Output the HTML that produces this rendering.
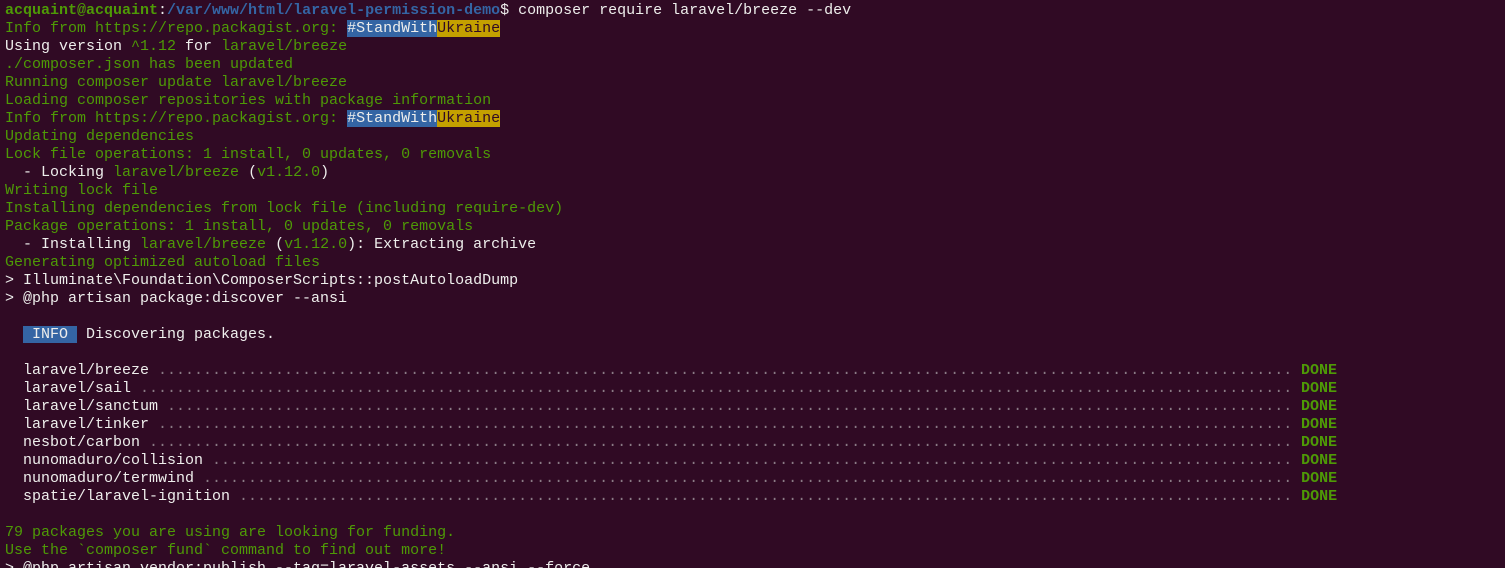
<!DOCTYPE html>
<html><head><meta charset="utf-8"><style>
html,body{margin:0;padding:0;background:#300a24;width:1505px;height:568px;overflow:hidden}
pre{margin:0;padding:2px 0 0 5px;font-family:"Liberation Mono",monospace;font-size:15px;line-height:18px;color:#eeeeec;white-space:pre}
.g{color:#4e9a06}.gb{color:#4e9a06;font-weight:bold}.b{color:#3465a4}.bb{color:#3465a4;font-weight:bold}
.sb{background:#3465a4;color:#eeeeec}.sy{background:#c4a000;color:#300a24}
.d{color:#8a7a85;display:inline-block;overflow:hidden;vertical-align:bottom;height:18px}
</style></head><body><pre><span class="gb">acquaint@acquaint</span>:<span class="bb">/var/www/html/laravel-permission-demo</span>$ composer require laravel/breeze --dev
<span class="g">Info from https://repo.packagist.org: </span><span class="sb">#StandWith</span><span class="sy">Ukraine</span>
Using version <span class="g">^1.12</span> for <span class="g">laravel/breeze</span>
<span class="g">./composer.json has been updated</span>
<span class="g">Running composer update laravel/breeze</span>
<span class="g">Loading composer repositories with package information</span>
<span class="g">Info from https://repo.packagist.org: </span><span class="sb">#StandWith</span><span class="sy">Ukraine</span>
<span class="g">Updating dependencies</span>
<span class="g">Lock file operations: 1 install, 0 updates, 0 removals</span>
  - Locking <span class="g">laravel/breeze</span> (<span class="g">v1.12.0</span>)
<span class="g">Writing lock file</span>
<span class="g">Installing dependencies from lock file (including require-dev)</span>
<span class="g">Package operations: 1 install, 0 updates, 0 removals</span>
  - Installing <span class="g">laravel/breeze</span> (<span class="g">v1.12.0</span>): Extracting archive
<span class="g">Generating optimized autoload files</span>
&gt; Illuminate\Foundation\ComposerScripts::postAutoloadDump
&gt; @php artisan package:discover --ansi

  <span class="sb"> INFO </span> Discovering packages.

  laravel/breeze <span class="d" style="width:1134px">.................................................................................................................................</span> <span class="gb">DONE</span>
  laravel/sail <span class="d" style="width:1152px">.................................................................................................................................</span> <span class="gb">DONE</span>
  laravel/sanctum <span class="d" style="width:1125px">.................................................................................................................................</span> <span class="gb">DONE</span>
  laravel/tinker <span class="d" style="width:1134px">.................................................................................................................................</span> <span class="gb">DONE</span>
  nesbot/carbon <span class="d" style="width:1143px">.................................................................................................................................</span> <span class="gb">DONE</span>
  nunomaduro/collision <span class="d" style="width:1080px">.................................................................................................................................</span> <span class="gb">DONE</span>
  nunomaduro/termwind <span class="d" style="width:1089px">.................................................................................................................................</span> <span class="gb">DONE</span>
  spatie/laravel-ignition <span class="d" style="width:1053px">.................................................................................................................................</span> <span class="gb">DONE</span>

<span class="g">79 packages you are using are looking for funding.</span>
<span class="g">Use the `composer fund` command to find out more!</span>
&gt; @php artisan vendor:publish --tag=laravel-assets --ansi --force
</pre></body></html>
